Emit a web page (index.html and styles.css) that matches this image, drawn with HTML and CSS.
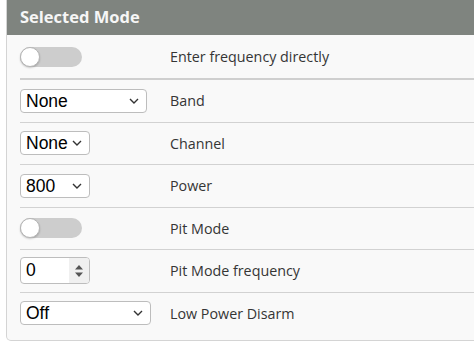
FILE: index.html
```html
<!DOCTYPE html>
<html lang="en">
<head>
    <meta charset="UTF-8">
    <meta name="viewport" content="width=device-width, initial-scale=1.0">
    <title>Selected Mode</title>
    <link rel="stylesheet" href="styles.css">
</head>
<body>
    <div class="panel">
        <div class="panel-header">Selected Mode</div>

        <div class="panel-body">
            <div class="row first">
                <div class="control">
                    <input type="checkbox" class="switch" id="freqDirect">
                </div>
                <label for="freqDirect" class="row-label">Enter frequency directly</label>
            </div>

            <div class="row">
                <div class="control">
                    <span class="select-wrap">
                        <select class="select band">
                            <option>None</option>
                        </select>
                        <svg class="chevron" width="10" height="6" viewBox="0 0 10 6"><path d="M1 1 L5 5 L9 1" fill="none" stroke="#333" stroke-width="1.4"/></svg>
                    </span>
                </div>
                <span class="row-label">Band</span>
            </div>

            <div class="row">
                <div class="control">
                    <span class="select-wrap">
                        <select class="select small">
                            <option>None</option>
                        </select>
                        <svg class="chevron" width="10" height="6" viewBox="0 0 10 6"><path d="M1 1 L5 5 L9 1" fill="none" stroke="#333" stroke-width="1.4"/></svg>
                    </span>
                </div>
                <span class="row-label">Channel</span>
            </div>

            <div class="row">
                <div class="control">
                    <span class="select-wrap">
                        <select class="select small">
                            <option>800</option>
                        </select>
                        <svg class="chevron" width="10" height="6" viewBox="0 0 10 6"><path d="M1 1 L5 5 L9 1" fill="none" stroke="#333" stroke-width="1.4"/></svg>
                    </span>
                </div>
                <span class="row-label">Power</span>
            </div>

            <div class="row">
                <div class="control">
                    <input type="checkbox" class="switch" id="pitMode">
                </div>
                <label for="pitMode" class="row-label">Pit Mode</label>
            </div>

            <div class="row">
                <div class="control">
                    <span class="number-wrap">
                        <input type="number" class="number" value="0">
                        <span class="spin">
                            <svg width="8" height="16" viewBox="0 0 8 16"><path d="M4 2 L8 6.5 L0 6.5 Z M0 9.5 L8 9.5 L4 14 Z" fill="#555"/></svg>
                        </span>
                    </span>
                </div>
                <span class="row-label">Pit Mode frequency</span>
            </div>

            <div class="row last">
                <div class="control">
                    <span class="select-wrap">
                        <select class="select disarm">
                            <option>Off</option>
                        </select>
                        <svg class="chevron" width="10" height="6" viewBox="0 0 10 6"><path d="M1 1 L5 5 L9 1" fill="none" stroke="#333" stroke-width="1.4"/></svg>
                    </span>
                </div>
                <span class="row-label">Low Power Disarm</span>
            </div>
        </div>
    </div>
</body>
</html>
```

FILE: styles.css
```css
body {
    margin: 0;
    background: #ffffff;
    font-family: "Open Sans", Arial, sans-serif;
    overflow: hidden;
}
.panel {
    margin-left: 6px;
    width: 490px;
    height: 341px;
    background: #f9f9f9;
    border: 1px solid #d4d4d4;
    border-top: none;
    border-radius: 0 0 5px 5px;
    box-sizing: border-box;
}
.panel-header {
    height: 35px;
    line-height: 34px;
    background: #7f847f;
    color: #f6f6f6;
    font-size: 16.5px;
    font-weight: bold;
    padding-left: 13px;
}
.panel-body {
    padding-left: 13px;
}
.row {
    display: flex;
    align-items: center;
    height: 41.5px;
    border-bottom: 1px solid #d2d2d2;
}
.row.first {
    height: 43px;
    border-bottom: 2px solid #cfcfcf;
}
.row.last {
    border-bottom: none;
}
.control {
    width: 150px;
    flex: none;
    display: flex;
    align-items: center;
}
.row-label {
    font-size: 14.3px;
    color: #353535;
}
.switch {
    appearance: none;
    -webkit-appearance: none;
    position: relative;
    margin: 0;
    width: 62px;
    height: 20px;
    border-radius: 10px;
    background: #cdcdcd;
    cursor: pointer;
}
.switch::before {
    content: "";
    position: absolute;
    left: 0;
    top: 0;
    width: 18px;
    height: 18px;
    border-radius: 50%;
    background: #ffffff;
    border: 1px solid #b5b5b5;
    box-shadow: 0 1px 2px rgba(0, 0, 0, 0.2);
}
.select-wrap,
.number-wrap {
    position: relative;
    display: inline-block;
}
.select {
    appearance: none;
    -webkit-appearance: none;
    margin: 0;
    height: 24px;
    padding: 0 0 0 5px;
    font-family: "Liberation Sans", Arial, sans-serif;
    font-size: 17.5px;
    color: #000;
    background: #ffffff;
    border: 1px solid #bdbdbd;
    border-radius: 4px;
    box-sizing: border-box;
}
.select.band {
    width: 127px;
}
.select.small {
    width: 70px;
}
.select.disarm {
    width: 131px;
}
.chevron {
    position: absolute;
    right: 8px;
    top: 9px;
    pointer-events: none;
}
.number {
    appearance: textfield;
    -moz-appearance: textfield;
    margin: 0;
    width: 70px;
    height: 27px;
    padding: 0 0 0 5px;
    font-family: "Liberation Sans", Arial, sans-serif;
    font-size: 17.5px;
    color: #000;
    background: #ffffff;
    border: 1px solid #bdbdbd;
    border-radius: 4px;
    box-sizing: border-box;
}
.number::-webkit-inner-spin-button,
.number::-webkit-outer-spin-button {
    -webkit-appearance: none;
    margin: 0;
}
.spin {
    position: absolute;
    right: 1px;
    top: 1px;
    bottom: 1px;
    width: 20px;
    background: #f0f0f0;
    border-radius: 0 3px 3px 0;
    display: flex;
    align-items: center;
    justify-content: center;
}
```
